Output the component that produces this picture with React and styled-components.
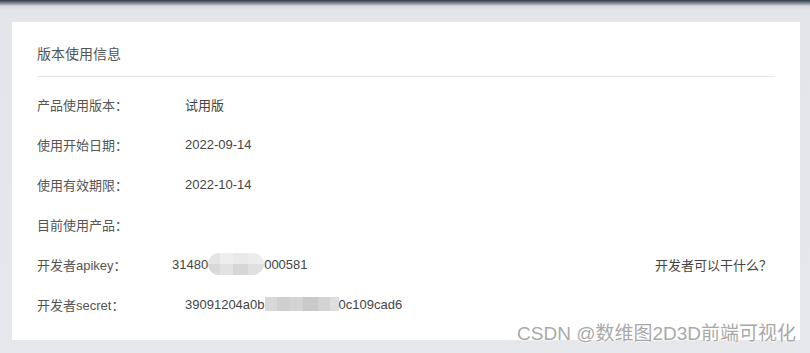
import React from "react";
import styled, { createGlobalStyle } from "styled-components";

const GlobalStyle = createGlobalStyle`
  html, body {
    margin: 0;
    padding: 0;
  }
  body {
    font-family: "Liberation Sans", "Noto Sans CJK SC", sans-serif;
    background: #e6e7eb;
  }
`;

const Page = styled.div`
  position: relative;
  width: 810px;
  height: 353px;
  box-sizing: border-box;
  padding: 22px 10px 13px 12px;
  background: linear-gradient(180deg, #2e3a45 0px, #7d8590 3px, #d5d8dd 6px, #e4e5e9 10px, #e6e7eb 100%);
  overflow: hidden;
`;

const Card = styled.section`
  height: 100%;
  box-sizing: border-box;
  background: #fff;
  padding: 22px 25px 16px 25px;
`;

const Header = styled.div`
  font-size: 14px;
  line-height: 20px;
  color: #555;
  padding-bottom: 12px;
  border-bottom: 1px solid #e6e6e6;
  margin-bottom: 7px;
`;

const Row = styled.div`
  display: flex;
  align-items: center;
  height: 40px;
  font-size: 13px;
  color: #444;
`;

const Label = styled.div`
  width: ${({ $width }) => $width || 148}px;
  flex-shrink: 0;
  color: #555;
`;

const Value = styled.div`
  flex: 1;
  display: flex;
  align-items: center;
  white-space: nowrap;
`;

const Mask = styled.span`
  display: inline-block;
  width: ${({ $w }) => $w}px;
  height: ${({ $h }) => $h}px;
  border-radius: ${({ $round }) => ($round ? "11px" : "0")};
  background:
    linear-gradient(90deg, #e4e4e4 0 22%, #eeeeee 22% 45%, #e9e9e9 45% 72%, #ececec 72% 100%) top / 100% 50% no-repeat,
    linear-gradient(90deg, #d9d9d9 0 22%, #e2e2e2 22% 45%, #d6d6d6 45% 72%, #e0e0e0 72% 100%) bottom / 100% 50% no-repeat;
`;

const BarMask = styled(Mask)`
  background: linear-gradient(90deg, #d8d8d8 0 16%, #cfcfcf 16% 34%, #d4d4d4 34% 52%, #c9c9c9 52% 72%, #d2d2d2 72% 88%, #dedede 88% 100%);
`;

const HelpLink = styled.a`
  margin-right: 3px;
  color: #444;
  font-size: 13px;
  text-decoration: none;
  cursor: pointer;
`;

const Watermark = styled.div`
  position: absolute;
  right: 14px;
  bottom: 7px;
  font-size: 19px;
  line-height: 24px;
  color: #a9a9a9;
  text-shadow: 0 0 1px #fff, 0 0 2px #fff, 0 0 3px #fff;
  pointer-events: none;
`;

const rows = [
  ["产品使用版本：", "试用版"],
  ["使用开始日期：", "2022-09-14"],
  ["使用有效期限：", "2022-10-14"],
  ["目前使用产品：", ""],
];

export default function App() {
  return (
    <>
      <GlobalStyle />
      <Page>
        <Card>
          <Header>版本使用信息</Header>
          {rows.map(([label, value]) => (
            <Row key={label}>
              <Label>{label}</Label>
              <Value>{value}</Value>
            </Row>
          ))}
          <Row>
            <Label $width={135}>开发者apikey：</Label>
            <Value>
              31480
              <Mask $w={56} $h={22} $round />
              000581
            </Value>
            <HelpLink>开发者可以干什么？</HelpLink>
          </Row>
          <Row>
            <Label>开发者secret：</Label>
            <Value>
              39091204a0b
              <BarMask $w={74} $h={14} />
              0c109cad6
            </Value>
          </Row>
        </Card>
        <Watermark>CSDN @数维图2D3D前端可视化</Watermark>
      </Page>
    </>
  );
}
